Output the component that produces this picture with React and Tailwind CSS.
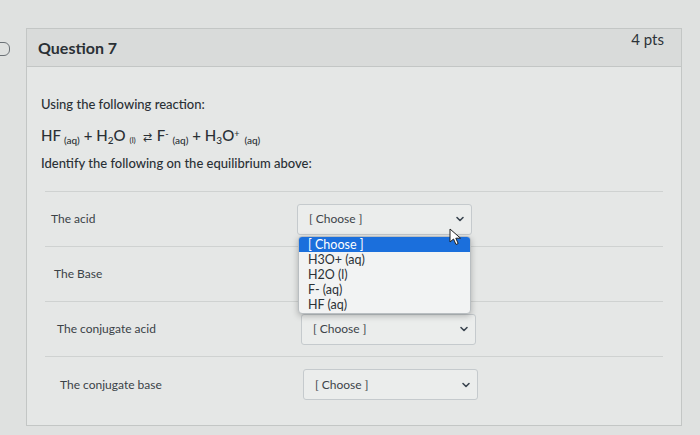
import React from "react";

const rows = ["The acid", "The Base", "The conjugate acid", "The conjugate base"];
const options = ["H3O+ (aq)", "H2O (l)", "F- (aq)", "HF (aq)"];

function Chevron() {
  return (
    <svg width="10" height="10" viewBox="0 0 10 10" className="text-[#3b4650]">
      <path d="M2 3.5 L5 6.5 L8 3.5" fill="none" stroke="currentColor" strokeWidth="1.6" strokeLinecap="round" strokeLinejoin="round" />
    </svg>
  );
}

function Select({ open, hidden }) {
  return (
    <div className="relative w-[175px]">
      <div
        className={`flex h-[31px] items-center justify-between rounded-[3px] border border-[#c5cacd] bg-[#ebedec] pl-[11px] pr-[6px] text-[12px] text-[#3d4449] ${hidden ? "invisible" : ""}`}
      >
        <span>[ Choose ]</span>
        <Chevron />
      </div>
      {open && (
        <>
          <div className="absolute left-[1px] top-[32px] z-10 w-[173px] overflow-hidden rounded-[4px] border border-[#b9bec1] bg-[#f2f3f3] pb-[1px] text-[12.5px] leading-[15px] text-[#2b3136] shadow-[0_2px_6px_rgba(0,0,0,0.25)]">
            <div className="bg-[#1b6fdc] px-[9px] text-white">[ Choose ]</div>
            {options.map((o) => (
              <div key={o} className="px-[9px]">{o}</div>
            ))}
          </div>
          <svg className="absolute left-[152px] top-[24px] z-20" width="14" height="18" viewBox="0 0 14 18">
            <path d="M1 1 L1 14 L4.5 11 L7 16.5 L9.2 15.5 L6.8 10.2 L11.5 10.2 Z" fill="#fff" stroke="#222" strokeWidth="1" strokeLinejoin="round" />
          </svg>
        </>
      )}
    </div>
  );
}

export default function App() {
  return (
    <div
      className="relative h-[435px] w-[700px] overflow-hidden bg-[#dfe1e0] pl-[26px] pr-[18px] pt-[28px] text-[#2d3b45]"
      style={{ fontFamily: "Lato, 'Open Sans', sans-serif" }}
    >
      {/* flag marker, cut off at the left */}
      <div className="absolute left-[-14px] top-[42px] h-[14px] w-[24px] rounded-[6px] border-[1.5px] border-[#6b7176]" />

      <div className="h-[398px] border border-[#c3c6c5] bg-[#e5e7e6]">
        <div className="flex h-[38px] items-center justify-between border-b border-[#c3c6c5] bg-[#d9dbda] pl-[11px] pr-[17px]">
          <h2 className="text-[16px] font-bold text-[#2a3035]">Question 7</h2>
          <span className="-mt-[16px] text-[15px] text-[#2d3338]">4 pts</span>
        </div>

        <div className="px-[14px] pt-[28px] text-[13px] font-medium leading-[18px] text-[#2a3035]">
          <p>Using the following reaction:</p>
          <p className="mt-[13px] flex items-baseline text-[15px]">
            <span>HF</span>
            <sub className="ml-[3px] text-[10px]">(aq)</sub>
            <span className="ml-[4px]">+ H</span>
            <sub className="text-[10px]">2</sub>
            <span>O</span>
            <sub className="ml-[4px] text-[8px]">(l)</sub>
            <span className="ml-[7px] text-[11px]">⇄</span>
            <span className="ml-[5px]">F</span>
            <sup className="text-[9px]">-</sup>
            <sub className="ml-[4px] text-[10px]">(aq)</sub>
            <span className="ml-[4px]">+ H</span>
            <sub className="text-[10px]">3</sub>
            <span>O</span>
            <sup className="text-[9px]">+</sup>
            <sub className="ml-[5px] text-[10px]">(aq)</sub>
          </p>
          <p className="mt-[8px]">Identify the following on the equilibrium above:</p>
        </div>

        <div className="mx-[18px] mt-[19px] border-t border-[#cfd2d1]">
          {rows.map((r, i) => (
            <div
              key={r}
              className={`flex h-[55px] items-center ${i < rows.length - 1 ? "border-b border-[#cfd2d1]" : ""}`}
            >
              <div className="w-[252px] text-[12px] text-[#3a4247]" style={{ paddingLeft: 6 + i * 3 }}>
                {r}
              </div>
              <div style={{ marginLeft: i * 2 }}>
                <Select open={i === 0} hidden={i === 1} />
              </div>
            </div>
          ))}
        </div>
      </div>
    </div>
  );
}
